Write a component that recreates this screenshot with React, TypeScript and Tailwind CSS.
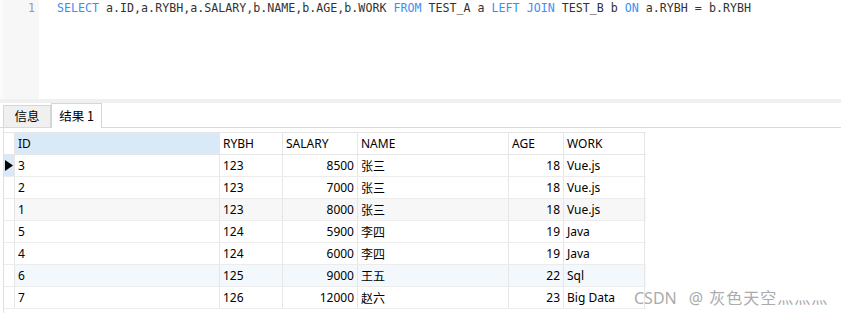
import { FC } from "react";

// Types
interface iRow {
  id: string;
  rybh: string;
  salary: string;
  name: string;
  age: string;
  work: string;
  bg: string;
}

const rows: iRow[] = [
  { id: "3", rybh: "123", salary: "8500", name: "张三", age: "18", work: "Vue.js", bg: "bg-white" },
  { id: "2", rybh: "123", salary: "7000", name: "张三", age: "18", work: "Vue.js", bg: "bg-white" },
  { id: "1", rybh: "123", salary: "8000", name: "张三", age: "18", work: "Vue.js", bg: "bg-[#f7f7f7]" },
  { id: "5", rybh: "124", salary: "5900", name: "李四", age: "19", work: "Java", bg: "bg-white" },
  { id: "4", rybh: "124", salary: "6000", name: "李四", age: "19", work: "Java", bg: "bg-white" },
  { id: "6", rybh: "125", salary: "9000", name: "王五", age: "22", work: "Sql", bg: "bg-[#f3f8fd]" },
  { id: "7", rybh: "126", salary: "12000", name: "赵六", age: "23", work: "Big Data", bg: "bg-white" },
];

const KW = "text-[#3b8ff0]";

const Editor: FC = () => (
  <div className="flex h-[99px]">
    <div className="w-[3px] bg-[#fbfbfb]" />
    <div className="w-[36px] bg-[#f7f7f7] pr-[4px] text-right text-[#9a9a9a] leading-[16px]">1</div>
    <div className="flex-1 pl-[18px] leading-[16px] text-[#333] whitespace-pre">
      <span className={KW}>SELECT</span> a.ID,a.RYBH,a.SALARY,b.NAME,b.AGE,b.WORK <span className={KW}>FROM</span> TEST_A a <span className={KW}>LEFT</span> <span className={KW}>JOIN</span> TEST_B b <span className={KW}>ON</span> a.RYBH = b.RYBH
    </div>
  </div>
);

// Cell widths include right border
const cell = "h-full flex items-center border-r border-[#e6e6e6] px-[3px] shrink-0";

const App: FC = () => {
  return (
    <div className="w-[841px] h-[317px] bg-white relative overflow-hidden text-black text-[12px] font-['Noto_Sans','Noto_Sans_CJK_SC',sans-serif]">
      <div className="font-['DejaVu_Sans_Mono','Liberation_Mono',monospace] text-[11.65px]">
        <Editor />
      </div>
      <div className="h-[4px] bg-[#f0f0f0]" />

      {/* Tabs */}
      <div className="h-[25px] pl-[3px] flex items-end border-b border-[#dadada]">
        <div className="w-[48px] h-[22px] bg-[#f0f0f0] border border-b-0 border-[#d6d6d6] flex items-center justify-center text-[12.5px] font-['Noto_Sans_CJK_SC',sans-serif]">
          信息
        </div>
        <div className="w-[51px] h-[25px] bg-white border border-b-0 border-[#d6d6d6] -mb-px relative flex items-center justify-center text-[12.5px] font-['Noto_Sans_CJK_SC',sans-serif]">
          结果 1
        </div>
      </div>

      {/* Grid */}
      <div className="ml-[3px] border-l border-[#e0e0e0] pt-[4px] h-[185px]">
        <div className="flex h-[23px] border-y border-[#e6e6e6] w-[642px]">
          <div className={`${cell} w-[11px] px-0`} />
          <div className={`${cell} w-[205px] bg-[#d9e9f7]`}>ID</div>
          <div className={`${cell} w-[63px]`}>RYBH</div>
          <div className={`${cell} w-[75px]`}>SALARY</div>
          <div className={`${cell} w-[151px]`}>NAME</div>
          <div className={`${cell} w-[55px]`}>AGE</div>
          <div className={`${cell} w-[81px]`}>WORK</div>
        </div>
        {rows.map((r, i) => (
          <div key={`r_${i}`} className={`flex h-[22px] border-b border-[#ececec] w-[642px] ${r.bg}`}>
            <div className={`${cell} w-[11px] px-0 justify-center ${i === 0 ? "bg-[#d9e9f7]" : "bg-white"}`}>
              {i === 0 && (
                <svg width="8" height="11" viewBox="0 0 8 11" className="shrink-0">
                  <polygon points="0,0 8,5.5 0,11" fill="#000" />
                </svg>
              )}
            </div>
            <div className={`${cell} w-[205px]`}>{r.id}</div>
            <div className={`${cell} w-[63px]`}>{r.rybh}</div>
            <div className={`${cell} w-[75px] justify-end`}>{r.salary}</div>
            <div className={`${cell} w-[151px] font-['Noto_Sans_CJK_SC',sans-serif]`}>{r.name}</div>
            <div className={`${cell} w-[55px] justify-end`}>{r.age}</div>
            <div className={`${cell} w-[81px]`}>{r.work}</div>
          </div>
        ))}
      </div>

      {/* Watermark */}
      <div className="absolute left-[634px] top-[287px] flex items-center text-[16px] leading-[22px] text-[#ababab] font-['Noto_Sans','Noto_Sans_CJK_SC',sans-serif]">
        <span>CSDN</span>
        <span className="ml-[12px]">@</span>
        <span className="ml-[6px] tracking-[1px]">灰色天空灬灬灬</span>
      </div>
    </div>
  );
};

export default App;
